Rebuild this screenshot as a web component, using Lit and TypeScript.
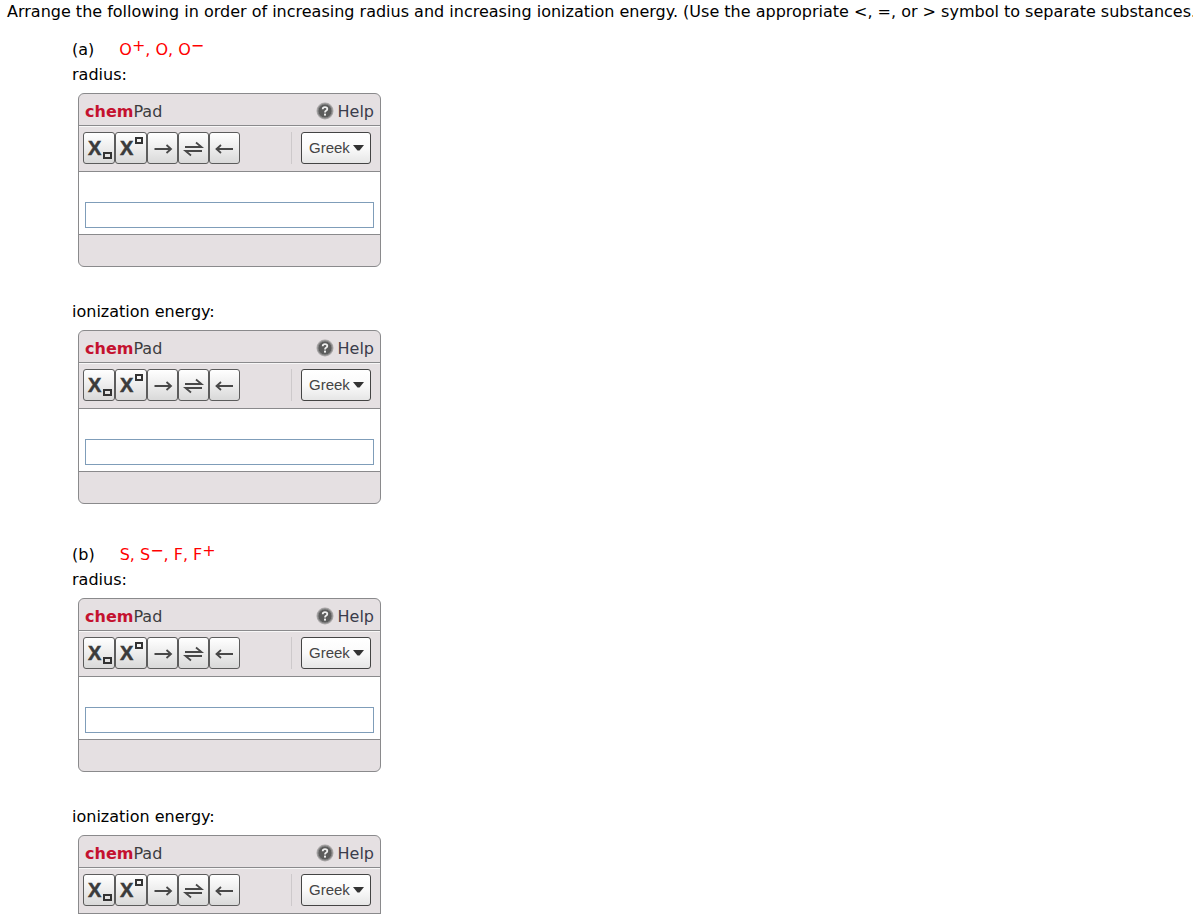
import { LitElement, html, svg, css } from "lit";
import { customElement, property } from "lit/decorators.js";

@customElement("chem-pad")
export class ChemPad extends LitElement {
  @property() label = "";

  static styles = css`
    :host {
      display: block;
      font-family: Verdana, "DejaVu Sans", sans-serif;
      font-size: 16px;
      line-height: 25px;
      color: #000;
    }
    .caption {
      display: block;
    }
    .pad {
      box-sizing: border-box;
      width: 303px;
      margin: 6px 0 0 6px;
      border: 1px solid #8a8a8c;
      border-radius: 6px;
      overflow: hidden;
      background: #e5e0e2;
    }
    .header {
      display: flex;
      align-items: center;
      justify-content: space-between;
      height: 31px;
      padding: 4px 6px 0;
      box-sizing: border-box;
      color: #3c3c3e;
    }
    .brand strong {
      color: #c4122f;
    }
    .help {
      display: flex;
      align-items: center;
      gap: 4px;
      color: #3a3c4b;
      text-decoration: none;
    }
    .help svg {
      display: block;
      margin-bottom: 2px;
    }
    .toolbar {
      display: flex;
      align-items: flex-start;
      box-sizing: border-box;
      height: 47px;
      padding: 6px 9px 0 4px;
      border-top: 1px solid #8a8a8c;
      border-bottom: 1px solid #8a8a8c;
      box-shadow: inset 0 1px #f8f7f7;
    }
    .tools {
      display: flex;
      flex: 1;
    }
    .tool {
      box-sizing: border-box;
      width: 31px;
      height: 32px;
      padding: 0;
      border: 1px solid #5c5c5c;
      border-radius: 3px;
      background: linear-gradient(#ffffff, #ededed 50%, #d9d9d9);
    }
    .tool.wide {
      width: 32px;
    }
    .tool svg {
      display: block;
    }
    .letter {
      fill: #3b3b3b;
      stroke: #3b3b3b;
      stroke-width: 0.5px;
      font: bold 20px "Liberation Sans", Arial, sans-serif;
    }
    .greek {
      display: grid;
      align-items: center;
      padding-left: 9px;
      border-left: 1px solid #cdc9cb;
    }
    .greek select,
    .greek svg {
      grid-area: 1 / 1;
    }
    .greek select {
      appearance: none;
      box-sizing: border-box;
      width: 70px;
      height: 32px;
      margin: 0;
      padding: 0 0 2px 7px;
      border: 1px solid #444;
      border-radius: 3px;
      background: linear-gradient(#ffffff, #fafafa 50%, #e6e6e6);
      color: #444;
      font: 15px "Liberation Sans", Arial, sans-serif;
    }
    .greek svg {
      justify-self: end;
      margin-right: 7px;
      pointer-events: none;
    }
    .entry {
      padding: 30px 6px 6px;
      background: #fff;
    }
    .entry input {
      display: block;
      box-sizing: border-box;
      width: 100%;
      height: 26px;
      margin: 0;
      padding: 0 4px;
      border: 1px solid #7f9db9;
      border-radius: 0;
      background: #fff;
      font: inherit;
      outline: none;
    }
    .footer {
      height: 31px;
      border-top: 1px solid #8a8a8c;
    }
  `;

  private glyph(shape: unknown) {
    return html`<svg width="30" height="30" viewBox="0 0 30 30" fill="none" stroke="#484848" aria-hidden="true">${shape}</svg>`;
  }

  render() {
    const letter = svg`<text class="letter" x="4" y="22">X</text>`;
    return html`
      <label class="caption" for="answer">${this.label}</label>
      <div class="pad">
        <div class="header">
          <span class="brand"><strong>chem</strong>Pad</span>
          <a class="help" href="#">
            <svg width="18" height="18" viewBox="0 0 18 18" aria-hidden="true">
              <circle cx="9" cy="9" r="8.5" fill="#aaa7a8" />
              <circle cx="9" cy="9" r="7" fill="#5c5c5c" stroke="#858585" />
              <path d="M6.7 7.2Q6.8 5.2 9 5.2Q11.3 5.2 11.3 7.1Q11.3 8.1 10 8.8Q9 9.4 9 10.4" fill="none" stroke="#eee" stroke-width="1.8" />
              <rect x="8" y="11.6" width="2" height="2" fill="#eee" />
            </svg>
            Help
          </a>
        </div>
        <div class="toolbar">
          <div class="tools">
            <button class="tool wide" type="button" aria-label="Subscript">
              ${this.glyph(svg`${letter}<rect x="20" y="20" width="7" height="5" stroke="#333" stroke-width="2"/>`)}
            </button>
            <button class="tool wide" type="button" aria-label="Superscript">
              ${this.glyph(svg`${letter}<rect x="20" y="5" width="6" height="5" stroke="#333" stroke-width="2"/>`)}
            </button>
            <button class="tool" type="button" aria-label="Right arrow">
              ${this.glyph(svg`<path d="M6.5 16H22.5" stroke-width="2"/><path d="M18.5 12L23 16L18.5 20" stroke-width="1.8"/>`)}
            </button>
            <button class="tool" type="button" aria-label="Equilibrium arrow">
              ${this.glyph(svg`<path d="M6 14H22.5L17 9.5M23 18H6.5L12 22.5" stroke-width="1.8"/>`)}
            </button>
            <button class="tool" type="button" aria-label="Left arrow">
              ${this.glyph(svg`<path d="M23 16H7" stroke-width="2"/><path d="M11 12L6.5 16L11 20" stroke-width="1.8"/>`)}
            </button>
          </div>
          <div class="greek">
            <select aria-label="Greek letters">
              <option>Greek</option>
            </select>
            <svg width="11" height="6" viewBox="0 0 11 6" aria-hidden="true"><path d="M0 0H11L6.5 5.5H4.5Z" fill="#333" /></svg>
          </div>
        </div>
        <div class="entry"><input id="answer" type="text" /></div>
        <div class="footer"></div>
      </div>
    `;
  }
}

@customElement("app-root")
export class AppRoot extends LitElement {
  static styles = css`
    :host {
      display: block;
      overflow: hidden;
      font-family: Verdana, "DejaVu Sans", sans-serif;
      font-size: 16px;
      line-height: 25px;
      color: #000;
      background: #fff;
    }
    .question {
      margin: 0 0 13px;
      padding-left: 7px;
      line-height: 24px;
      white-space: nowrap;
    }
    .part {
      padding-left: 72px;
      margin-bottom: 38px;
    }
    .substances {
      display: flex;
      gap: 25px;
      height: 25px;
    }
    .values {
      color: #f00;
    }
    sup {
      font-size: 16px;
      line-height: 0;
      vertical-align: 4px;
    }
    .energy {
      margin-top: 32px;
    }
  `;

  render() {
    return html`
      <main>
        <p class="question">
          Arrange the following in order of increasing radius and increasing ionization energy. (Use the appropriate &lt;, =, or &gt; symbol to separate substances.)
        </p>
        <section class="part">
          <div class="substances">
            <span>(a)</span><span class="values">O<sup>+</sup>, O, O<sup>−</sup></span>
          </div>
          <chem-pad label="radius:"></chem-pad>
          <chem-pad class="energy" label="ionization energy:"></chem-pad>
        </section>
        <section class="part">
          <div class="substances">
            <span>(b)</span><span class="values">S, S<sup>−</sup>, F, F<sup>+</sup></span>
          </div>
          <chem-pad label="radius:"></chem-pad>
          <chem-pad class="energy" label="ionization energy:"></chem-pad>
        </section>
      </main>
    `;
  }
}
